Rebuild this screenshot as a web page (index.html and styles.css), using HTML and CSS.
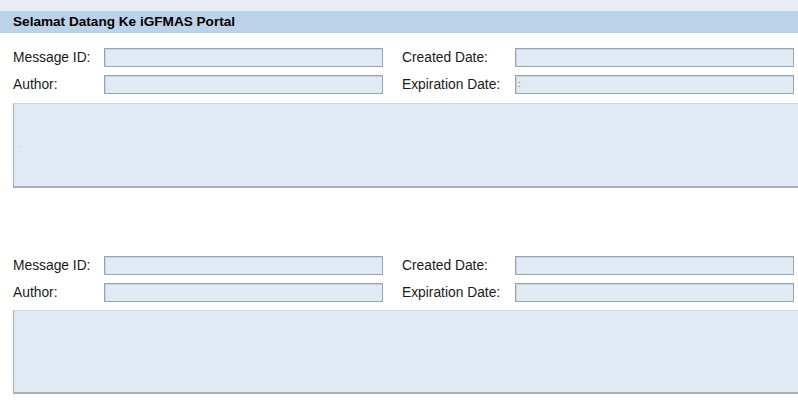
FILE: index.html
```html
<!DOCTYPE html>
<html>
<head>
<meta charset="utf-8">
<link rel="stylesheet" href="styles.css">
</head>
<body>
<div class="page">
  <div class="top-strip"></div>
  <div class="header">Selamat Datang Ke iGFMAS Portal</div>

  <div class="message">
    <div class="fields">
      <label class="lbl">Message ID:</label>
      <div class="box"></div>
      <label class="lbl lbl-right">Created Date:</label>
      <div class="box"></div>
      <label class="lbl">Author:</label>
      <div class="box"></div>
      <label class="lbl lbl-right">Expiration Date:</label>
      <div class="box"><span class="caret">:</span></div>
    </div>
    <div class="body-box"><span class="speck"></span></div>
  </div>

  <div class="message second">
    <div class="fields">
      <label class="lbl">Message ID:</label>
      <div class="box"></div>
      <label class="lbl lbl-right">Created Date:</label>
      <div class="box"></div>
      <label class="lbl">Author:</label>
      <div class="box"></div>
      <label class="lbl lbl-right">Expiration Date:</label>
      <div class="box"></div>
    </div>
    <div class="body-box short"></div>
  </div>
</div>
</body>
</html>
```

FILE: styles.css
```css
html, body {
  margin: 0;
  padding: 0;
  background: #ffffff;
  overflow: hidden;
}

.page {
  width: 798px;
  height: 419px;
  overflow: hidden;
  font-family: "Liberation Sans", Arial, sans-serif;
  color: #000;
}

.top-strip {
  height: 11px;
  background: #e7eef6;
}

.header {
  height: 22px;
  line-height: 22px;
  background: #bbd2e8;
  padding-left: 13px;
  font-size: 13.6px;
  font-weight: bold;
}

.message {
  padding: 15px 0 0 13px;
}

.message.second {
  margin-top: 53px;
}

.fields {
  display: grid;
  grid-template-columns: 91px 279px 132px 279px;
  row-gap: 8px;
  width: 781px;
}

.lbl {
  font-size: 13.8px;
  line-height: 19px;
  height: 19px;
  color: #1a1a1a;
}

.lbl-right {
  padding-left: 19px;
}

.box {
  height: 19px;
  box-sizing: border-box;
  background: #dfeaf4;
  border: 1px solid #9ba4ae;
  box-shadow: inset 1px 1px 0 #c9d3dd;
  position: relative;
}

.caret {
  position: absolute;
  left: 2px;
  top: 1px;
  font-size: 9px;
  line-height: 14px;
  color: #6a7380;
}

.body-box {
  margin-top: 9px;
  height: 85px;
  width: 800px;
  box-sizing: border-box;
  background: #dfeaf4;
  border: 1px solid #a8afb7;
  border-top-color: #cfd5db;
  border-bottom: 2px solid #aab1b9;
  position: relative;
}

.body-box.short {
  margin-top: 8px;
  height: 84px;
}

.speck {
  position: absolute;
  left: 6px;
  top: 42px;
  width: 1px;
  height: 1px;
  background: #b7c0ca;
}
```
